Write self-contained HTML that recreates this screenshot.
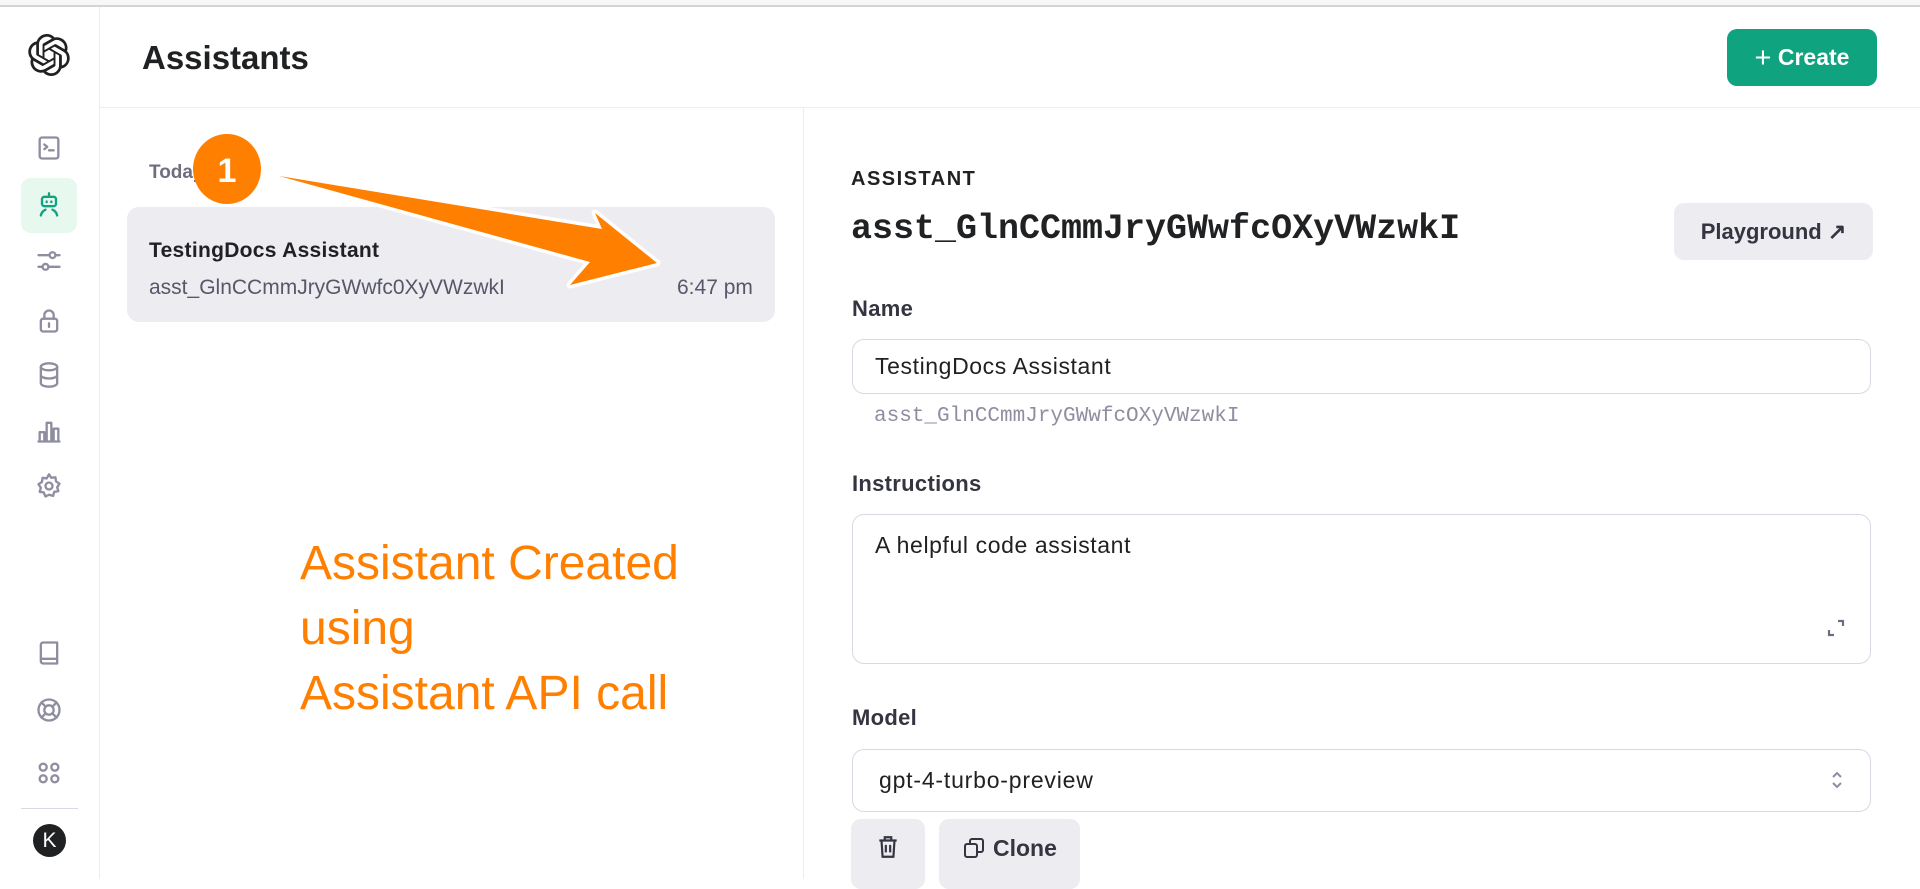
<!DOCTYPE html>
<html><head><meta charset="utf-8"><style>
*{box-sizing:border-box;margin:0;padding:0}
body{width:1920px;height:879px;overflow:hidden;background:#fff;font-family:"Liberation Sans",sans-serif;color:#202123;position:relative}
.abs{position:absolute}
.topline{left:0;top:0;width:1920px;height:7px;background:#f7f7f8;border-bottom:2px solid #d4d4d8}
.side{left:0;top:7px;width:100px;height:872px;border-right:1px solid #ececf1}
.ico{position:absolute;left:35px;width:28px;height:28px}
.ico svg{width:28px;height:28px;fill:none;stroke:#8e8ea0;stroke-width:2;stroke-linecap:round;stroke-linejoin:round}
.hdr{left:100px;top:7px;width:1820px;height:101px;border-bottom:1px solid #ececf1}
.lbl{font-size:22px;font-weight:bold;color:#343541;letter-spacing:0.3px}
.inp{border:1.5px solid #d9d9e3;border-radius:12px;background:#fff}
.gbtn{background:#ececf1;border-radius:10px}
</style></head><body>
<div class="abs topline"></div>
<div class="abs side"></div>
<svg class="abs" style="left:28px;top:34px" width="42" height="42" viewBox="0 0 24 24" fill="#202123"><path d="M22.28 9.82a5.98 5.98 0 0 0-.52-4.91 6.05 6.05 0 0 0-6.51-2.9A6.07 6.07 0 0 0 4.98 4.18a5.98 5.98 0 0 0-4 2.9 6.05 6.05 0 0 0 .75 7.1 5.98 5.98 0 0 0 .51 4.91 6.05 6.05 0 0 0 6.52 2.9A5.98 5.98 0 0 0 13.26 24a6.06 6.06 0 0 0 5.77-4.21 5.99 5.99 0 0 0 4-2.9 6.06 6.06 0 0 0-.75-7.07zm-9.02 12.61a4.48 4.48 0 0 1-2.88-1.04l.14-.08 4.78-2.76a.8.8 0 0 0 .39-.68v-6.74l2.02 1.17a.07.07 0 0 1 .04.05v5.58a4.5 4.5 0 0 1-4.49 4.5zm-9.66-4.13a4.47 4.47 0 0 1-.53-3.01l.14.09 4.78 2.76a.77.77 0 0 0 .78 0l5.84-3.37v2.33a.08.08 0 0 1-.03.06l-4.84 2.79a4.5 4.5 0 0 1-6.14-1.65zM2.34 7.9a4.49 4.49 0 0 1 2.37-1.97V11.6a.77.77 0 0 0 .39.68l5.81 3.35-2.02 1.17a.08.08 0 0 1-.07 0l-4.83-2.79A4.5 4.5 0 0 1 2.34 7.87zm16.6 3.86-5.83-3.39 2.02-1.16a.08.08 0 0 1 .07 0l4.83 2.79a4.49 4.49 0 0 1-.68 8.1v-5.68a.79.79 0 0 0-.41-.66zm2.01-3.02-.14-.09-4.77-2.78a.78.78 0 0 0-.79 0L9.41 9.23V6.9a.07.07 0 0 1 .03-.06l4.83-2.79a4.5 4.5 0 0 1 6.68 4.66zM8.31 12.86l-2.02-1.16a.08.08 0 0 1-.04-.06V6.07a4.5 4.5 0 0 1 7.38-3.45l-.14.08-4.78 2.76a.8.8 0 0 0-.39.68zm1.1-2.37 2.6-1.5 2.6 1.5v3l-2.6 1.5-2.6-1.5z"/></svg>
<div class="abs" style="left:21px;top:178px;width:56px;height:55px;background:#e7f8ee;border-radius:10px"></div>
<div class="ico" style="top:134px"><svg viewBox="0 0 24 24"><rect x="4" y="3" width="16" height="18" rx="2"/><path d="M8 9l2.5 2L8 13M12 14h4"/></svg></div>
<div class="ico" style="top:191px"><svg viewBox="0 0 24 24" style="stroke:#10a37f"><rect x="6" y="5" width="12" height="8" rx="2"/><path d="M12 2v3M10 9v.5M14 9v.5M5 21a7 7 0 0 1 4-5M19 21a7 7 0 0 0-4-5"/></svg></div>
<div class="ico" style="top:247px"><svg viewBox="0 0 24 24"><circle cx="15" cy="7" r="2.5"/><circle cx="9" cy="17" r="2.5"/><path d="M3 7h9.5M17.5 7H21M3 17h3.5M11.5 17H21"/></svg></div>
<div class="ico" style="top:307px"><svg viewBox="0 0 24 24"><rect x="5" y="10" width="14" height="11" rx="2"/><path d="M8 10V7a4 4 0 0 1 8 0v3M12 14v3"/></svg></div>
<div class="ico" style="top:361px"><svg viewBox="0 0 24 24"><ellipse cx="12" cy="5" rx="7" ry="3"/><path d="M5 5v14c0 1.7 3.1 3 7 3s7-1.3 7-3V5M5 12c0 1.7 3.1 3 7 3s7-1.3 7-3"/></svg></div>
<div class="ico" style="top:417px"><svg viewBox="0 0 24 24"><path d="M4 21V13h4v8M10 21V5h4v16M16 21V10h4v11M3 21h18"/></svg></div>
<div class="ico" style="top:472px"><svg viewBox="0 0 24 24"><circle cx="12" cy="12" r="3"/><path d="M12 2l2 3 3.5-.5.5 3.5 3 2-2 3 1 3.5-3.5.5-1 3.5-3.5-1L9 21l-1.5-3.5L4 17l1-3.5L3 10.5l3-2L6.5 5 10 5.5z"/></svg></div>
<div class="ico" style="top:639px"><svg viewBox="0 0 24 24"><path d="M5 19V5a2 2 0 0 1 2-2h12v18H7a2 2 0 0 1-2-2zM5 17h14"/></svg></div>
<div class="ico" style="top:696px"><svg viewBox="0 0 24 24"><circle cx="12" cy="12" r="9"/><circle cx="12" cy="12" r="4"/><path d="M5.5 5.5l3.7 3.7M18.5 5.5l-3.7 3.7M5.5 18.5l3.7-3.7M18.5 18.5l-3.7-3.7"/></svg></div>
<div class="ico" style="top:759px"><svg viewBox="0 0 24 24"><circle cx="7" cy="7" r="3"/><circle cx="17" cy="7" r="3"/><circle cx="7" cy="17" r="3"/><circle cx="17" cy="17" r="3"/></svg></div>
<div class="abs" style="left:21px;top:808px;width:57px;height:1px;background:#d9d9e3"></div>
<div class="abs" style="left:33px;top:824px;width:33px;height:33px;border-radius:50%;background:#202123;color:#fff;font-size:21px;text-align:center;line-height:33px">K</div>

<div class="abs hdr"></div>
<div class="abs" style="left:142px;top:39px;font-size:33px;font-weight:bold;color:#202123">Assistants</div>
<div class="abs" style="left:1727px;top:29px;width:150px;height:57px;background:#10a37f;border-radius:10px;color:#fff;font-size:23px;font-weight:bold;line-height:57px;text-align:center"><span style="font-weight:normal;font-size:29px;vertical-align:-2px">+</span> Create</div>

<div class="abs" style="left:803px;top:108px;width:1px;height:771px;background:#ececf1"></div>

<div class="abs" style="left:149px;top:162px;font-size:19px;font-weight:bold;color:#6e6e80">Today</div>
<div class="abs" style="left:127px;top:207px;width:648px;height:115px;background:#ececf1;border-radius:12px"></div>
<div class="abs" style="left:149px;top:239px;font-size:21px;font-weight:bold;color:#202123;letter-spacing:0.3px">TestingDocs Assistant</div>
<div class="abs" style="left:149px;top:276px;font-size:21px;color:#565869">asst_GlnCCmmJryGWwfc0XyVWzwkI</div>
<div class="abs" style="left:677px;top:276px;font-size:21px;color:#565869">6:47 pm</div>

<svg class="abs" style="left:0;top:0" width="800" height="330">
<path d="M279 176 L602 229 L595 213 L657 263 L570 285 L590 262 Z" fill="#ff7f00" stroke="#fff" stroke-width="7" stroke-linejoin="round"/>
<path d="M279 176 L602 229 L595 213 L657 263 L570 285 L590 262 Z" fill="#ff7f00"/>
<ellipse cx="227" cy="169" rx="34" ry="35" fill="#ff7f00"/>
<text x="227" y="182" text-anchor="middle" font-family="Liberation Sans" font-weight="bold" font-size="34" fill="#fff">1</text>
</svg>

<div class="abs" style="left:300px;top:531px;font-size:48px;line-height:65px;color:#ff7f00">Assistant Created<br>using<br>Assistant API call</div>

<div class="abs" style="left:851px;top:168px;font-size:20px;font-weight:bold;letter-spacing:1.5px;color:#202123">ASSISTANT</div>
<div class="abs" style="left:851px;top:209px;font-family:'Liberation Mono',monospace;font-size:35px;font-weight:bold;color:#202123">asst_GlnCCmmJryGWwfcOXyVWzwkI</div>
<div class="abs gbtn" style="left:1674px;top:203px;width:199px;height:57px;font-size:22px;font-weight:bold;line-height:57px;text-align:center;color:#343541">Playground ↗</div>

<div class="abs lbl" style="left:852px;top:296px">Name</div>
<div class="abs inp" style="left:852px;top:339px;width:1019px;height:55px;font-size:23px;letter-spacing:0.6px;padding:0 0 0 22px;line-height:52px;color:#202123">TestingDocs Assistant</div>
<div class="abs" style="left:874px;top:405px;font-family:'Liberation Mono',monospace;font-size:21px;color:#8e8ea0">asst_GlnCCmmJryGWwfcOXyVWzwkI</div>

<div class="abs lbl" style="left:852px;top:471px">Instructions</div>
<div class="abs inp" style="left:852px;top:514px;width:1019px;height:150px;font-size:23px;letter-spacing:0.6px;padding:17px 22px;color:#202123">A helpful code assistant</div>
<svg class="abs" style="left:1826px;top:618px" width="20" height="20" viewBox="0 0 20 20" fill="none" stroke="#6e6e80" stroke-width="2.2"><path d="M12 3h5v5M8 17H3v-5"/></svg>

<div class="abs lbl" style="left:852px;top:705px">Model</div>
<div class="abs inp" style="left:852px;top:749px;width:1019px;height:63px;font-size:23px;letter-spacing:0.8px;padding:0 0 0 26px;line-height:60px;color:#202123">gpt-4-turbo-preview</div>
<svg class="abs" style="left:1829px;top:769px" width="16" height="22" viewBox="0 0 16 22" fill="none" stroke="#8e8ea0" stroke-width="2"><path d="M4 8l4-4 4 4M4 14l4 4 4-4"/></svg>

<div class="abs gbtn" style="left:851px;top:819px;width:74px;height:70px"></div>
<svg class="abs" style="left:875px;top:833px" width="26" height="28" viewBox="0 0 24 24" fill="none" stroke="#343541" stroke-width="2"><path d="M4 6h16M9 6V3h6v3M6 6l1 15h10l1-15M10 10v7M14 10v7"/></svg>
<div class="abs gbtn" style="left:939px;top:819px;width:141px;height:70px"></div>
<svg class="abs" style="left:962px;top:835px" width="24" height="26" viewBox="0 0 24 24" fill="none" stroke="#343541" stroke-width="2"><rect x="3" y="8" width="12" height="13" rx="2"/><path d="M8 8V5a2 2 0 0 1 2-2h9a2 2 0 0 1 2 2v9a2 2 0 0 1-2 2h-4"/></svg>
<div class="abs" style="left:993px;top:835px;font-size:23px;font-weight:bold;color:#343541">Clone</div>
</body></html>
